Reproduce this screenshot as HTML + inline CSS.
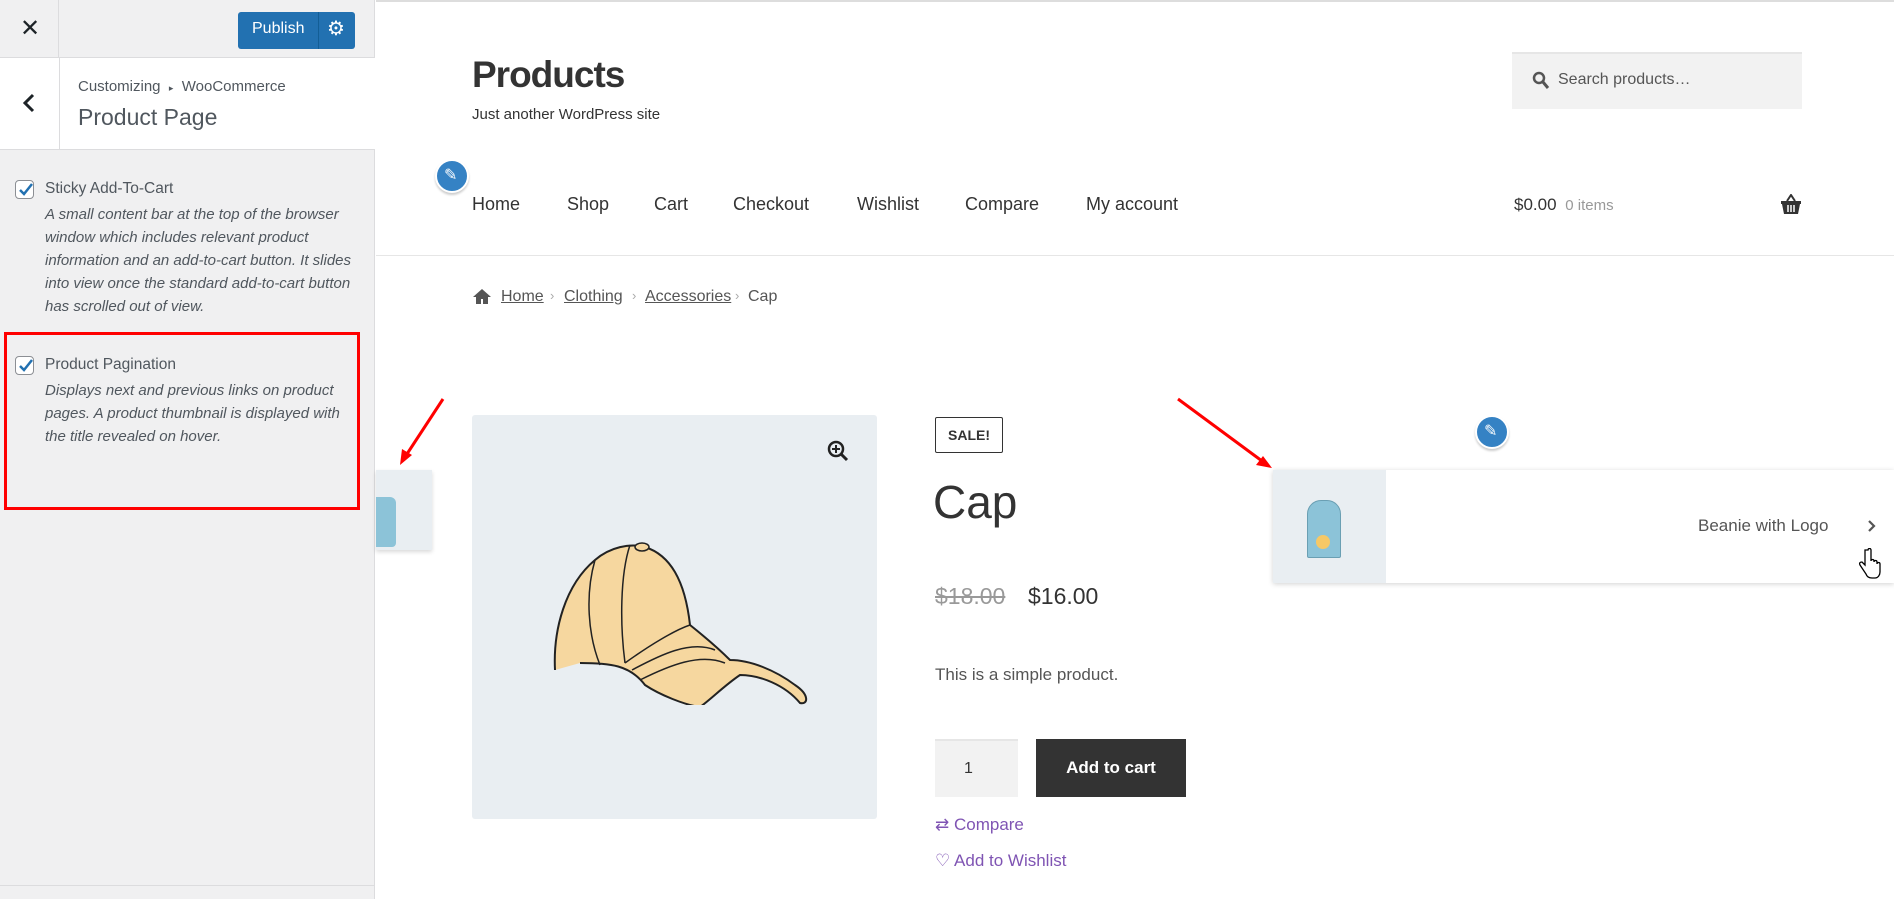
<!DOCTYPE html>
<html><head><meta charset="utf-8">
<style>
*{box-sizing:border-box;margin:0;padding:0}
body{width:1894px;height:899px;overflow:hidden;background:#fff;font-family:"Liberation Sans",sans-serif;position:relative;color:#333}
.a{position:absolute;white-space:nowrap}
#side{position:absolute;left:0;top:0;width:375px;height:899px;background:#f0f0f1;border-right:1px solid #dcdcde}
.desc{font-style:italic;color:#50575e;font-size:15px;line-height:23px;white-space:normal;width:312px}
.cb{position:absolute;width:19px;height:19px;border:1px solid #8c8f94;border-radius:4px;background:#fff}
.nav{font-size:18px;color:#333;top:194px}
.bc{font-size:16px;color:#555;top:288px;text-decoration:underline}
</style></head><body>
<div id="side">
 <div class="a" style="left:0;top:0;width:375px;height:58px;border-bottom:1px solid #dcdcde"></div>
 <div class="a" style="left:58px;top:0;width:1px;height:58px;background:#dcdcde"></div>
 <div class="a" style="left:20px;top:14px;font-size:24px;color:#1d2327">✕</div>
 <div class="a" style="left:238px;top:12px;width:117px;height:37px;background:#2271b1;border-radius:3px"></div>
 <div class="a" style="left:252px;top:20px;font-size:16px;color:#fff">Publish</div>
 <div class="a" style="left:318px;top:12px;width:1px;height:37px;background:#135e96"></div>
 <div class="a" style="left:327px;top:16px;font-size:20px;color:#fff">⚙</div>
 <div class="a" style="left:0;top:58px;width:375px;height:92px;background:#fff;border-bottom:1px solid #dcdcde"></div>
 <div class="a" style="left:59px;top:58px;width:1px;height:92px;background:#dcdcde"></div>
 <svg class="a" style="left:22px;top:93px" width="14" height="20"><path d="M11 2L3 10l8 8" stroke="#1d2327" stroke-width="3" fill="none"/></svg>
 <div class="a" style="left:78px;top:78px;font-size:15px;color:#50575e">Customizing &nbsp;<span style="font-size:9px">▸</span>&nbsp; WooCommerce</div>
 <div class="a" style="left:78px;top:104px;font-size:23px;color:#50575e">Product Page</div>
 <div class="cb" style="left:15px;top:180px"></div>
 <svg class="a" style="left:17px;top:181px" width="17" height="17"><path d="M3 9l4 4 8-10" stroke="#2271b1" stroke-width="2.5" fill="none"/></svg>
 <div class="a" style="left:45px;top:180px;font-size:15.5px;color:#50575e">Sticky Add-To-Cart</div>
 <div class="a desc" style="left:45px;top:203px">A small content bar at the top of the browser window which includes relevant product information and an add-to-cart button. It slides into view once the standard add-to-cart button has scrolled out of view.</div>
 <div class="a" style="left:4px;top:332px;width:356px;height:178px;border:3px solid #f00"></div>
 <div class="cb" style="left:15px;top:356px"></div>
 <svg class="a" style="left:17px;top:357px" width="17" height="17"><path d="M3 9l4 4 8-10" stroke="#2271b1" stroke-width="2.5" fill="none"/></svg>
 <div class="a" style="left:45px;top:356px;font-size:15.5px;color:#50575e">Product Pagination</div>
 <div class="a desc" style="left:45px;top:379px">Displays next and previous links on product pages. A product thumbnail is displayed with the title revealed on hover.</div>
 <div class="a" style="left:0;top:885px;width:375px;height:1px;background:#dcdcde"></div>
</div>
<div class="a" style="left:376px;top:0;width:1518px;height:2px;background:#ddd"></div>
<div class="a" style="left:472px;top:54px;font-size:37px;font-weight:bold;color:#333;letter-spacing:-1px">Products</div>
<div class="a" style="left:472px;top:106px;font-size:15px;color:#333">Just another WordPress site</div>
<div class="a" style="left:1512px;top:52px;width:290px;height:57px;background:#f2f2f2;border-top:2px solid #e6e6e6"></div>
<svg class="a" style="left:1532px;top:71px" width="18" height="20"><circle cx="7" cy="7" r="5" stroke="#555" stroke-width="2.5" fill="none"/><path d="M11 11l5 6" stroke="#555" stroke-width="3"/></svg>
<div class="a" style="left:1558px;top:71px;font-size:16px;color:#555">Search products…</div>
<div class="a" style="left:435px;top:159px;width:34px;height:34px;border-radius:50%;background:#3582c4;border:2px solid #fff;box-shadow:0 2px 2px rgba(0,0,0,.2)"></div>
<div class="a" style="left:444px;top:165px;font-size:16px;color:#fff">✎</div>
<div class="a nav" style="left:472px">Home</div>
<div class="a nav" style="left:567px">Shop</div>
<div class="a nav" style="left:654px">Cart</div>
<div class="a nav" style="left:733px">Checkout</div>
<div class="a nav" style="left:857px">Wishlist</div>
<div class="a nav" style="left:965px">Compare</div>
<div class="a nav" style="left:1086px">My account</div>
<div class="a" style="left:1514px;top:195px;font-size:17px;color:#333">$0.00 <span style="font-size:15px;color:#999;margin-left:4px">0 items</span></div>
<svg class="a" style="left:1780px;top:194px" width="22" height="22"><path d="M7 7L11 1 15 7" stroke="#333" stroke-width="2" fill="none"/><path d="M1 7h20v3h-1l-2 10H4L2 10H1z" fill="#333"/><path d="M8 11v7M11 11v7M14 11v7" stroke="#fff" stroke-width="1.5"/></svg>
<div class="a" style="left:376px;top:255px;width:1518px;height:1px;background:#e6e6e6"></div>
<svg class="a" style="left:472px;top:287px" width="20" height="18"><path d="M10 2L1 10h3v7h5v-5h2v5h5v-7h3z" fill="#555"/></svg>
<div class="a bc" style="left:501px">Home</div>
<div class="a" style="left:550px;top:288px;font-size:13px;color:#aaa">›</div>
<div class="a bc" style="left:564px">Clothing</div>
<div class="a" style="left:632px;top:288px;font-size:13px;color:#aaa">›</div>
<div class="a bc" style="left:645px">Accessories</div>
<div class="a" style="left:735px;top:288px;font-size:13px;color:#aaa">›</div>
<div class="a" style="left:748px;top:288px;font-size:16px;color:#555">Cap</div>
<div class="a" style="left:376px;top:470px;width:56px;height:80px;background:#e9eef2;box-shadow:0 2px 4px rgba(0,0,0,.15)"></div>
<div class="a" style="left:376px;top:497px;width:20px;height:50px;background:#8cc3d8;border-radius:0 6px 4px 0"></div>
<div class="a" style="left:472px;top:415px;width:405px;height:404px;background:#e9eef2;border-radius:3px"></div>
<svg class="a" style="left:826px;top:439px" width="24" height="24"><circle cx="10" cy="10" r="7" stroke="#222" stroke-width="2.5" fill="none"/><path d="M15 15l6 6" stroke="#222" stroke-width="3"/><path d="M10 6v8M6 10h8" stroke="#222" stroke-width="2"/></svg>
<svg class="a" style="left:550px;top:535px" width="270" height="170" viewBox="0 0 270 170"><path d="M5 135C3 95 15 50 45 25 60 12 80 8 95 12 120 20 135 45 140 90 150 98 165 110 180 125 200 125 225 135 245 150 260 160 258 170 250 168 235 150 210 140 190 140 175 150 160 165 150 172 135 170 110 160 95 150 80 130 60 128 30 128 10 140 5 135Z" fill="#f6d79f" stroke="#222" stroke-width="2"/><path d="M45 25C35 60 38 100 50 130M80 10C70 40 70 90 75 128M75 128C100 110 125 95 140 90M82 135C110 120 140 105 165 115M90 145C120 130 150 118 175 128" stroke="#222" stroke-width="1.5" fill="none"/><ellipse cx="92" cy="12" rx="7" ry="4" fill="#f6d79f" stroke="#222" stroke-width="1.5"/></svg>
<div class="a" style="left:935px;top:417px;width:68px;height:36px;border:1px solid #333;border-radius:2px;font-size:14px;font-weight:bold;color:#333;text-align:center;line-height:34px">SALE!</div>
<div class="a" style="left:933px;top:475px;font-size:46px;font-weight:300;color:#333">Cap</div>
<div class="a" style="left:935px;top:583px;font-size:23px;color:#999;text-decoration:line-through">$18.00</div>
<div class="a" style="left:1028px;top:583px;font-size:23px;color:#333">$16.00</div>
<div class="a" style="left:935px;top:665px;font-size:17px;color:#555">This is a simple product.</div>
<div class="a" style="left:935px;top:739px;width:83px;height:58px;background:#f2f2f2;border-top:2px solid #e6e6e6;font-size:16px;line-height:56px;padding-left:29px">1</div>
<div class="a" style="left:1036px;top:739px;width:150px;height:58px;background:#333;color:#fff;font-size:17px;font-weight:bold;line-height:58px;text-align:center">Add to cart</div>
<div class="a" style="left:935px;top:815px;font-size:17px;color:#7f54b3">⇄ Compare</div>
<div class="a" style="left:935px;top:851px;font-size:17px;color:#7f54b3">♡ Add to Wishlist</div>
<div class="a" style="left:1475px;top:415px;width:34px;height:34px;border-radius:50%;background:#3582c4;border:2px solid #fff;box-shadow:0 2px 2px rgba(0,0,0,.2)"></div>
<div class="a" style="left:1484px;top:421px;font-size:16px;color:#fff">✎</div>
<div class="a" style="left:1273px;top:470px;width:621px;height:113px;background:#fff;box-shadow:0 1px 5px rgba(0,0,0,.18)"></div>
<div class="a" style="left:1273px;top:470px;width:113px;height:113px;background:#e9eef2"></div>
<div class="a" style="left:1307px;top:500px;width:34px;height:58px;background:#8cc3d8;border-radius:14px 14px 2px 2px;border:1px solid #6a9fb3"></div>
<div class="a" style="left:1316px;top:535px;width:14px;height:14px;background:#f6c866;border-radius:50%"></div>
<div class="a" style="left:1698px;top:516px;font-size:17px;color:#555">Beanie with Logo</div>
<svg class="a" style="left:1867px;top:519px" width="10" height="14"><path d="M2 2l5 5-5 5" stroke="#555" stroke-width="2.2" fill="none"/></svg>
<svg class="a" style="left:1857px;top:548px" width="24" height="32"><path d="M8 2v15l-3-3c-2 0-3 1-2 3l6 9c1 3 3 4 6 4h3c3 0 5-3 5-6v-8c0-2-3-2-3 0v-2c0-2-3-2-3 0v-1c0-2-3-2-3 0V2c0-2-3-2-3 0z" fill="#fff" stroke="#000" stroke-width="1.3"/></svg>
<svg class="a" style="left:0;top:0" width="1894" height="899"><path d="M443 399L405 457" stroke="#f00" stroke-width="3"/><path d="M400 465l2-16 10 6z" fill="#f00"/><path d="M1178 399L1262 461" stroke="#f00" stroke-width="3"/><path d="M1272 468l-16-3 7-9z" fill="#f00"/></svg>
</body></html>
